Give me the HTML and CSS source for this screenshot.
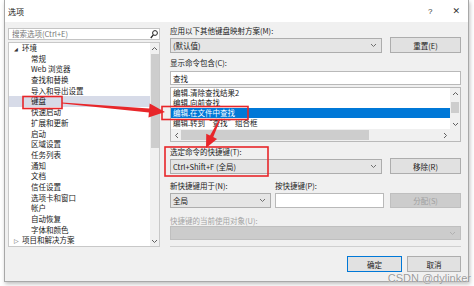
FILE: index.html
```html
<!DOCTYPE html>
<html lang="zh-CN">
<head>
<meta charset="utf-8">
<title>选项</title>
<link rel="stylesheet" href="styles.css">
</head>
<body>
<div class="window">
  <div class="titlebar">
    <span class="title">选项</span>
    <span class="tb-btns"><span class="help">?</span><span class="close">✕</span></span>
  </div>
  <div class="main">
    <div class="left">
      <div class="search">
        <span class="ph">搜索选项(Ctrl+E)</span>
        <svg class="mag" width="8" height="9" viewBox="0 0 8 9"><circle cx="5" cy="3" r="2.4" fill="none" stroke="#222" stroke-width="1"/><path d="M3.3 4.8 L0.8 8" stroke="#222" stroke-width="1.3"/></svg>
      </div>
      <div class="tree">
        <div class="tree-items">
          <div class="ti top"><span class="tw">◢</span>环境</div>
          <div class="ti child">常规</div>
          <div class="ti child">Web 浏览器</div>
          <div class="ti child">查找和替换</div>
          <div class="ti child">导入和导出设置</div>
          <div class="ti child sel">键盘</div>
          <div class="ti child">快速启动</div>
          <div class="ti child">扩展和更新</div>
          <div class="ti child">启动</div>
          <div class="ti child">区域设置</div>
          <div class="ti child">任务列表</div>
          <div class="ti child">通知</div>
          <div class="ti child">文档</div>
          <div class="ti child">信任设置</div>
          <div class="ti child">选项卡和窗口</div>
          <div class="ti child">帐户</div>
          <div class="ti child">自动恢复</div>
          <div class="ti child">字体和颜色</div>
          <div class="ti top"><span class="tw hollow">▷</span>项目和解决方案</div>
        </div>
        <div class="vscroll tree-scroll">
          <span class="arr"><svg width="7" height="5" viewBox="0 0 7 5"><path d="M1 4 L3.5 1.5 L6 4" fill="none" stroke="#606060" stroke-width="1"/></svg></span>
          <span class="thumb tthumb"></span>
          <span class="spacer"></span>
          <span class="arr"><svg width="7" height="5" viewBox="0 0 7 5"><path d="M1 1 L3.5 3.5 L6 1" fill="none" stroke="#606060" stroke-width="1"/></svg></span>
        </div>
      </div>
    </div>
    <div class="right">
      <div class="label l1">应用以下其他键盘映射方案(M):</div>
      <div class="row r1">
        <div class="combo"><span>(默认值)</span><svg class="chev" width="7" height="5" viewBox="0 0 7 5"><path d="M1 1 L3.5 3.5 L6 1" fill="none" stroke="#707070" stroke-width="1"/></svg></div>
        <div class="btn">重置(E)</div>
      </div>
      <div class="label l2">显示命令包含(C):</div>
      <div class="input"><span>查找</span></div>
      <div class="listbox">
        <div class="list-main">
          <div class="list-items">
            <div class="li">编辑.清除查找结果2</div>
            <div class="li">编辑.向前查找</div>
            <div class="li lsel">编辑.在文件中查找</div>
            <div class="li">编辑.转到“查找”组合框</div>
          </div>
          <div class="vscroll list-scroll">
            <span class="arr"><svg width="7" height="5" viewBox="0 0 7 5"><path d="M1 4 L3.5 1.5 L6 4" fill="none" stroke="#606060" stroke-width="1"/></svg></span>
            <span class="thumb lthumb"></span>
            <span class="spacer"></span>
            <span class="arr"><svg width="7" height="5" viewBox="0 0 7 5"><path d="M1 1 L3.5 3.5 L6 1" fill="none" stroke="#606060" stroke-width="1"/></svg></span>
          </div>
        </div>
        <div class="hscroll">
          <span class="harr"><svg width="5" height="7" viewBox="0 0 5 7"><path d="M4 1 L1.5 3.5 L4 6" fill="none" stroke="#606060" stroke-width="1"/></svg></span>
          <span class="hthumb"></span>
          <span class="spacer"></span>
          <span class="harr"><svg width="5" height="7" viewBox="0 0 5 7"><path d="M1 1 L3.5 3.5 L1 6" fill="none" stroke="#606060" stroke-width="1"/></svg></span>
          <span class="corner"></span>
        </div>
      </div>
      <div class="label l3">选定命令的快捷键(T):</div>
      <div class="row r2">
        <div class="combo"><span>Ctrl+Shift+F (全局)</span><svg class="chev" width="7" height="5" viewBox="0 0 7 5"><path d="M1 1 L3.5 3.5 L6 1" fill="none" stroke="#707070" stroke-width="1"/></svg></div>
        <div class="btn">移除(R)</div>
      </div>
      <div class="row labels l4">
        <div class="label lw">新快捷键用于(N):</div>
        <div class="label">按快捷键(P):</div>
      </div>
      <div class="row r3">
        <div class="combo small"><span>全局</span><svg class="chev" width="7" height="5" viewBox="0 0 7 5"><path d="M1 1 L3.5 3.5 L6 1" fill="none" stroke="#707070" stroke-width="1"/></svg></div>
        <div class="input keyin"></div>
        <div class="btn disabled">分配(S)</div>
      </div>
      <div class="label l5 dis">快捷键的当前使用对象(U):</div>
      <div class="combo full disabledc"><span></span><svg class="chev" width="7" height="5" viewBox="0 0 7 5"><path d="M1 1 L3.5 3.5 L6 1" fill="none" stroke="#b0b0b0" stroke-width="1"/></svg></div>
      <div class="sep"></div>
    </div>
  </div>
  <div class="footer">
    <div class="btn ok">确定</div>
    <div class="btn cancel">取消</div>
  </div>
</div>
<svg class="annot" width="474" height="286" viewBox="0 0 474 286">
  <rect x="23" y="96.5" width="39" height="12" fill="none" stroke="#e8262a" stroke-width="1.6"/>
  <rect x="162" y="106.5" width="86" height="13" fill="none" stroke="#e8262a" stroke-width="1.6"/>
  <rect x="165" y="147" width="103" height="29" fill="none" stroke="#e8262a" stroke-width="1.6"/>
  <polygon points="62.04,102.5 149.23,108.6 149.67,103.6 165,112 148.45,117.6 148.89,112.6 61.96,103.5" fill="#e8262a"/>
  <polygon points="219.55,118.78 210.03,135.52 206.25,133.69 206,148 217.05,138.91 213.27,137.08 220.45,119.22" fill="#e8262a"/>
</svg>
<div class="watermark">CSDN @dylinker</div>
</body>
</html>
```

FILE: styles.css
```css
* { box-sizing: border-box; }
html, body { margin: 0; padding: 0; }
body {
  width: 474px;
  height: 286px;
  overflow: hidden;
  position: relative;
  background: #ffffff;
  font-family: "Noto Sans CJK SC", "Noto Sans", sans-serif;
  font-size: 7.5px;
  color: #1a1a1a;
}
.window {
  margin-left: 4px;
  width: 465px;
  height: 282px;
  background: #f0f0f0;
  border: 1px solid #a8a8a8;
  border-top: none;
  box-shadow: 1px 2px 4px rgba(0,0,0,0.25);
  display: flex;
  flex-direction: column;
}
.titlebar {
  height: 22px;
  background: #ffffff;
  display: flex;
  align-items: center;
  justify-content: space-between;
  padding: 0 8px 0 3px;
  flex: none;
}
.title { font-size: 8px; color: #111; }
.tb-btns { display: flex; align-items: center; gap: 20px; color: #333; }
.help { font-family: "Liberation Sans", sans-serif; font-size: 8px; }
.close { font-family: "DejaVu Sans", sans-serif; font-size: 9px; }
.main {
  display: flex;
  padding: 3px 7px 0 3px;
  flex: none;
}
.left { width: 152px; flex: none; padding-top: 3px; }
.search {
  height: 12px;
  background: #fff;
  border: 1px solid #c4c4c4;
  display: flex;
  align-items: center;
  justify-content: space-between;
  padding: 0 1px 0 3px;
}
.ph { color: #767676; line-height: 10px; }
.mag { flex: none; }
.tree {
  margin-top: 2px;
  height: 205px;
  background: #fff;
  border: 1px solid #c8c8c8;
  display: flex;
}
.tree-items { flex: 1; padding-top: 0; }
.ti {
  height: 10.7px;
  line-height: 10.7px;
  white-space: nowrap;
}
.ti.top { padding-left: 5px; }
.ti.child { padding-left: 22px; }
.ti.sel { background: #d7dbe8; }
.tw {
  display: inline-block;
  width: 8px;
  font-family: "DejaVu Sans", sans-serif;
  font-size: 5px;
  color: #333;
}
.tw.hollow { color: #555; font-size: 6px; }
.vscroll {
  width: 9px;
  flex: none;
  background: #f0f0f0;
  display: flex;
  flex-direction: column;
  align-items: center;
}
.arr { height: 10px; display: flex; align-items: center; justify-content: center; flex: none; }
.thumb { width: 8px; background: #cdcdcd; flex: none; }
.tthumb { height: 94px; margin-top: 1px; }
.spacer { flex: 1; }
.right {
  width: 291px;
  margin-left: 10px;
  flex: none;
  display: flex;
  flex-direction: column;
}
.label { height: 10px; line-height: 10px; white-space: nowrap; color: #1a1a1a; }
.l1 { height: 11px; line-height: 11px; }
.l2 { margin-top: 5px; }
.l3 { margin-top: 5px; }
.l4 { margin-top: 7px; height: 10px; }
.l5 { margin-top: 8px; }
.dis { color: #a3a3a3; }
.row { display: flex; align-items: center; }
.r1 { margin-top: 1px; height: 16px; gap: 8px; }
.r2 { margin-top: 1px; height: 16px; gap: 8px; }
.r3 { margin-top: 2px; height: 15px; gap: 4px; }
.lw { width: 105px; }
.combo {
  height: 15px;
  width: 212px;
  background: #e5e5e5;
  border: 1px solid #adadad;
  display: flex;
  align-items: center;
  justify-content: space-between;
  padding: 0 4px 0 2px;
}
.combo.small { width: 101px; height: 15px; }
.combo.full { width: 291px; height: 14px; }
.combo.disabledc { background: #cccccc; border-color: #bfbfbf; }
.chev { flex: none; }
.btn {
  width: 71px;
  height: 16px;
  background: #e1e1e1;
  border: 1px solid #adadad;
  display: flex;
  align-items: center;
  justify-content: center;
  color: #1a1a1a;
}
.btn.disabled { background: #cccccc; border-color: #bfbfbf; color: #a0a0a0; height: 15px; margin-left: 2px; }
.input {
  margin-top: 3px;
  height: 14px;
  background: #fff;
  border: 1px solid #b9b9b9;
  display: flex;
  align-items: center;
  padding-left: 2px;
}
.input.keyin { margin-top: 0; width: 110px; height: 15px; }
.listbox {
  margin-top: 2px;
  height: 55px;
  background: #fff;
  border: 1px solid #b9b9b9;
  display: flex;
  flex-direction: column;
}
.list-main { display: flex; height: 41px; }
.list-items { flex: 1; }
.li { height: 10px; line-height: 10px; padding-left: 2px; white-space: nowrap; }
.lsel { background: #0078d7; color: #fff; }
.list-scroll { width: 10px; }
.lthumb { height: 11px; margin-top: 4px; width: 8px; }
.hscroll {
  height: 12px;
  display: flex;
  align-items: center;
  background: #f0f0f0;
}
.harr { width: 10px; height: 12px; display: flex; align-items: center; justify-content: center; flex: none; }
.hthumb { width: 188px; height: 10px; background: #cdcdcd; flex: none; }
.corner { width: 10px; height: 12px; background: #f0f0f0; flex: none; }
.sep { margin-top: 6px; height: 1px; background: #d0d0d0; }
.footer {
  display: flex;
  justify-content: flex-end;
  gap: 5px;
  padding: 9px 7px 0 0;
}
.btn.ok { width: 55px; border-color: #0078d7; }
.btn.cancel { width: 54px; }
.annot { position: absolute; left: 0; top: 0; pointer-events: none; }
.watermark {
  position: absolute;
  right: 3px;
  bottom: 2px;
  font-family: "Liberation Sans", sans-serif;
  font-size: 11px;
  color: rgba(120,120,120,0.75);
  text-shadow: 0 0 1px #fff;
}
```
